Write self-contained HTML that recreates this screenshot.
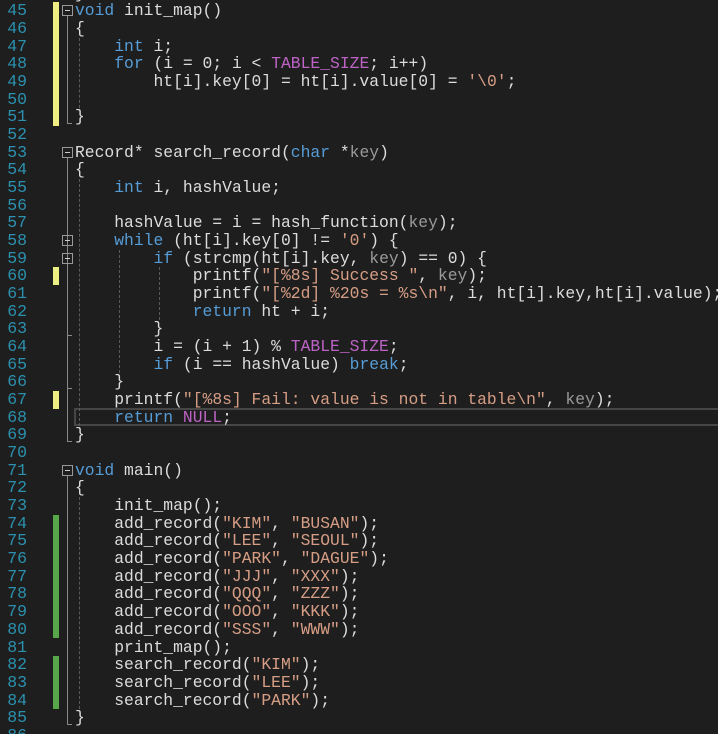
<!DOCTYPE html>
<html><head><meta charset="utf-8"><style>
html,body{margin:0;padding:0;background:#1e1e1e;width:718px;height:734px;overflow:hidden;position:relative}
.l{position:absolute;left:75px;height:17.675px;line-height:17.675px;font-family:"Liberation Mono",monospace;font-size:16.35px;color:#dcdcdc;white-space:pre}
.n{position:absolute;left:0;width:27px;text-align:right;height:17.675px;line-height:17.675px;font-family:"Liberation Mono",monospace;font-size:16.5px;color:#2b91af}
.k{color:#569cd6}.s{color:#d69d85}.m{color:#bd63c5}.p{color:#9a9a9a}
.y{position:absolute;left:53px;width:6px;background:#eeee82}
.g{position:absolute;left:53px;width:6px;background:#57a64a}
.fb{position:absolute;left:62px;width:11px;height:11px;border:1px solid #999;box-sizing:border-box}
.fb:after{content:"";position:absolute;left:2px;right:2px;top:4px;height:1px;background:#ccc}
.fv{position:absolute;left:67px;width:1px;background:#888}
.ft{position:absolute;left:67px;width:5px;height:1px;background:#888}
.ig{position:absolute;width:0;border-left:1px dashed #5a5a5a}
</style></head><body>
<div id="c"></div>
<script>
var L={44:'<span>}</span>',45:'<span class="k">void</span> init_map()',46:'{',47:'    <span class="k">int</span> i;',48:'    <span class="k">for</span> (i = 0; i &lt; <span class="m">TABLE_SIZE</span>; i++)',49:'        ht[i].key[0] = ht[i].value[0] = <span class="s">\'\\0\'</span>;',50:'',51:'}',52:'',
53:'Record* search_record(<span class="k">char</span> *<span class="p">key</span>)',54:'{',55:'    <span class="k">int</span> i, hashValue;',56:'',57:'    hashValue = i = hash_function(<span class="p">key</span>);',58:'    <span class="k">while</span> (ht[i].key[0] != <span class="s">\'0\'</span>) {',59:'        <span class="k">if</span> (strcmp(ht[i].key, <span class="p">key</span>) == 0) {',60:'            printf(<span class="s">"[%8s] Success "</span>, <span class="p">key</span>);',61:'            printf(<span class="s">"[%2d] %20s = %s\\n"</span>, i, ht[i].key,ht[i].value);',62:'            <span class="k">return</span> ht + i;',63:'        }',64:'        i = (i + 1) % <span class="m">TABLE_SIZE</span>;',65:'        <span class="k">if</span> (i == hashValue) <span class="k">break</span>;',66:'    }',67:'    printf(<span class="s">"[%8s] Fail: value is not in table\\n"</span>, <span class="p">key</span>);',68:'    <span class="k">return</span> <span class="m">NULL</span>;',69:'}',70:'',
71:'<span class="k">void</span> main()',72:'{',73:'    init_map();',74:'    add_record(<span class="s">"KIM"</span>, <span class="s">"BUSAN"</span>);',75:'    add_record(<span class="s">"LEE"</span>, <span class="s">"SEOUL"</span>);',76:'    add_record(<span class="s">"PARK"</span>, <span class="s">"DAGUE"</span>);',77:'    add_record(<span class="s">"JJJ"</span>, <span class="s">"XXX"</span>);',78:'    add_record(<span class="s">"QQQ"</span>, <span class="s">"ZZZ"</span>);',79:'    add_record(<span class="s">"OOO"</span>, <span class="s">"KKK"</span>);',80:'    add_record(<span class="s">"SSS"</span>, <span class="s">"WWW"</span>);',81:'    print_map();',82:'    search_record(<span class="s">"KIM"</span>);',83:'    search_record(<span class="s">"LEE"</span>);',84:'    search_record(<span class="s">"PARK"</span>);',85:'}',86:''};
var H=17.675;function T(n){return 2.2+(n-45)*H}
var h='';
h+='<div style="position:absolute;left:74px;top:'+(T(68)-1)+'px;width:650px;height:'+(H+1)+'px;border:2px solid #464646;box-sizing:border-box"></div>';
for(var n=44;n<=86;n++){h+='<div class="n" style="top:'+T(n)+'px">'+n+'</div><div class="l" style="top:'+T(n)+'px">'+L[n]+'</div>';}
function bar(c,a,b){h+='<div class="'+c+'" style="top:'+T(a)+'px;height:'+(T(b+1)-T(a))+'px"></div>';}
bar('y',45,51);bar('y',60,60);bar('y',67,67);bar('g',74,80);bar('g',82,84);
function fold(a,b){var t=T(a)+3;h+='<div class="fb" style="top:'+t+'px"></div><div class="fv" style="top:'+(t+11)+'px;height:'+(T(b)+H-3-t-11)+'px"></div><div class="ft" style="top:'+(T(b)+H-3)+'px"></div>';}
fold(45,51);fold(53,69);fold(58,66);fold(59,63);fold(71,85);
function ig(x,a,b){h+='<div class="ig" style="left:'+x+'px;top:'+T(a)+'px;height:'+(T(b+1)-T(a))+'px"></div>';}
ig(79,47,50);ig(79,55,68);ig(119,59,65);ig(159,60,62);ig(79,73,84);
document.getElementById('c').innerHTML=h;
</script>
</body></html>
